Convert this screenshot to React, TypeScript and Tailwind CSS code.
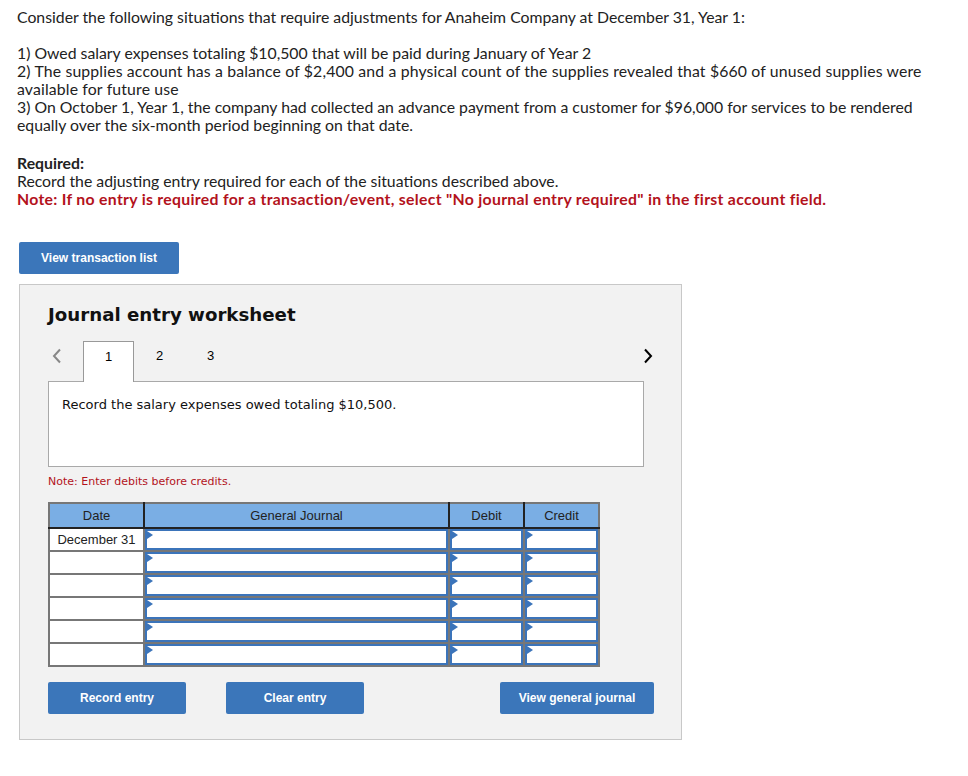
import { FC } from "react";

const bodyFont = { fontFamily: "Lato, 'Open Sans', sans-serif" };

const rows = ["December 31", "", "", "", "", ""];

const Field: FC = () => (
  <div className="relative h-[21px] border-2 border-[#3b74ba] bg-white">
    <span className="absolute left-0 top-0 h-0 w-0 border-y-[4px] border-l-[6px] border-y-transparent border-l-[#3b74ba]" />
  </div>
);

const BlueButton: FC<{ label: string; width: string }> = ({ label, width }) => (
  <button
    className={`${width} h-[32px] rounded-[2px] bg-[#3b76ba] text-[12px] font-bold text-white`}
    style={{ fontFamily: "'Liberation Sans', Arial, sans-serif" }}
  >
    {label}
  </button>
);

export default function App() {
  return (
    <div className="min-h-[776px] bg-white px-[17px] pt-[8px] text-[15.8px] leading-[18px] text-[#222]" style={bodyFont}>
      <p className="whitespace-nowrap">
        Consider the following situations that require adjustments for Anaheim Company at December 31, Year 1:
      </p>
      <div className="mt-[18px] whitespace-nowrap">
        <p>1) Owed salary expenses totaling $10,500 that will be paid during January of Year 2</p>
        <p className="tracking-[0.15px]">
          2) The supplies account has a balance of $2,400 and a physical count of the supplies revealed that $660 of unused supplies were
          <br />
          available for future use
        </p>
        <p>
          3) On October 1, Year 1, the company had collected an advance payment from a customer for $96,000 for services to be rendered
          <br />
          equally over the six-month period beginning on that date.
        </p>
      </div>
      <div className="mt-[20px] whitespace-nowrap">
        <p className="font-bold">Required:</p>
        <p>Record the adjusting entry required for each of the situations described above.</p>
        <p className="font-bold tracking-[0.3px] text-[#b3121c]">
          Note: If no entry is required for a transaction/event, select "No journal entry required" in the first account field.
        </p>
      </div>

      <div className="ml-[2px] mt-[34px]">
        <BlueButton label="View transaction list" width="w-[160px]" />
      </div>

      <div className="ml-[2px] mt-[10px] w-[663px] border border-[#c8c8c8] bg-[#f2f2f2] pb-[25px] pl-[28px] pt-[19px]">
        <h2
          className="text-[18.2px] font-bold leading-[22px] text-[#111]"
          style={{ fontFamily: "'DejaVu Sans', Verdana, sans-serif" }}
        >
          Journal entry worksheet
        </h2>

        <div className="mt-[15px] flex w-[605px] items-end justify-between">
          <div className="flex items-end">
            <div className="flex h-[40px] w-[35px] items-start pl-[4px] pt-[7px] text-[#888]">
              <svg width="10" height="16" viewBox="0 0 10 16">
                <path d="M8 1.5 L2 8 L8 14.5" fill="none" stroke="currentColor" strokeWidth="2" />
              </svg>
            </div>
            {["1", "2", "3"].map((t, i) => (
              <div
                key={t}
                className={`relative z-10 -mb-px flex h-[41px] w-[51px] items-start justify-center pt-[7px] text-[13px] leading-[15px] text-black ${
                  i === 0 ? "border border-b-0 border-[#999] bg-white" : ""
                }`}
                style={{ fontFamily: "'Liberation Sans', Arial, sans-serif" }}
              >
                {t}
              </div>
            ))}
          </div>
          <div className="flex h-[40px] items-start pt-[7px] text-black">
            <svg width="10" height="16" viewBox="0 0 10 16">
              <path d="M2 1.5 L8 8 L2 14.5" fill="none" stroke="currentColor" strokeWidth="2" />
            </svg>
          </div>
        </div>

        <div
          className="h-[86px] w-[596px] border border-[#a9a9a9] bg-white px-[13px] pt-[15px] text-[13px] leading-[15px] text-[#111]"
          style={{ fontFamily: "'DejaVu Sans', Verdana, sans-serif" }}
        >
          Record the salary expenses owed totaling $10,500.
        </div>

        <p
          className="mt-[8px] text-[11px] leading-[13px] text-[#b3121c]"
          style={{ fontFamily: "'DejaVu Sans', Verdana, sans-serif" }}
        >
          Note: Enter debits before credits.
        </p>

        <table
          className="mt-[14px] border-collapse text-[13px] text-[#222]"
          style={{ fontFamily: "'Liberation Sans', Arial, sans-serif" }}
        >
          <thead>
            <tr className="h-[25px] bg-[#7aaee4]">
              <th className="w-[95px] border-2 border-b-2 border-[#777] border-b-[#222] border-r-[#222] p-0 font-normal">Date</th>
              <th className="w-[305px] border-2 border-x-[#222] border-b-[#222] border-t-[#777] p-0 font-normal">General Journal</th>
              <th className="w-[75px] border-2 border-x-[#222] border-b-[#222] border-t-[#777] p-0 font-normal">Debit</th>
              <th className="w-[75px] border-2 border-[#777] border-b-[#222] border-l-[#222] p-0 font-normal">Credit</th>
            </tr>
          </thead>
          <tbody>
            {rows.map((d, i) => (
              <tr key={i} className="h-[23px] bg-white">
                <td className="border-2 border-[#777] p-0 text-center">{d}</td>
                <td className="border-2 border-[#777] p-0">
                  <Field />
                </td>
                <td className="border-2 border-[#777] p-0">
                  <Field />
                </td>
                <td className="border-2 border-[#777] p-0">
                  <Field />
                </td>
              </tr>
            ))}
          </tbody>
        </table>

        <div className="mt-[15px] flex w-[606px] items-center">
          <BlueButton label="Record entry" width="w-[138px]" />
          <div className="ml-[40px]">
            <BlueButton label="Clear entry" width="w-[138px]" />
          </div>
          <div className="ml-auto">
            <BlueButton label="View general journal" width="w-[154px]" />
          </div>
        </div>
      </div>
    </div>
  );
}
